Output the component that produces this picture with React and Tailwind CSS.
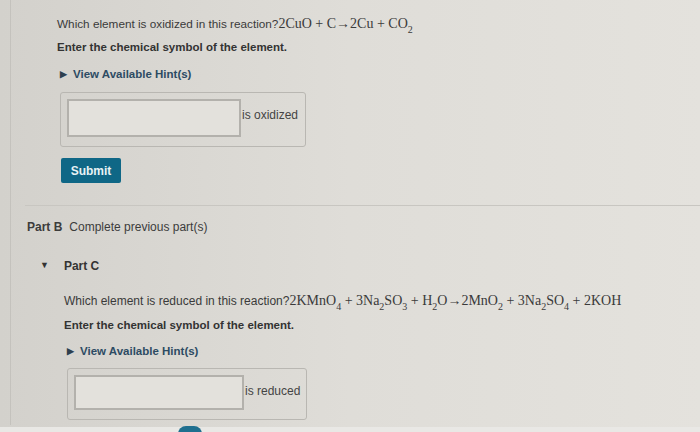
import { Fragment } from "react";

const serif = { fontFamily: '"Liberation Serif", "DejaVu Serif", serif' };

// Chemical formula rendered in serif with subscripts
const Chem = ({ parts }) => (
  <span className="text-[14px] text-[#3a3a3a]" style={serif}>
    {parts.map((p, i) =>
      typeof p === "string" ? (
        <Fragment key={i}>{p}</Fragment>
      ) : (
        <sub key={i} className="text-[10px] align-[-2px]">
          {p.sub}
        </sub>
      )
    )}
  </span>
);

const Hint = () => (
  <div className="flex items-center gap-[6px] text-[11.5px] leading-[14px] font-bold text-[#2d4b63]">
    <span className="text-[9px] text-[#2d3f4f]">▶</span>
    View Available Hint(s)
  </div>
);

const AnswerBox = ({ label, width, inner }) => (
  <div
    className={`flex items-start rounded-[3px] border border-[#b9b7b2] p-[6px] pr-0 ${width}`}
  >
    <div className={`shrink-0 border-2 border-[#b3b1ac] bg-[#e3e1dc] ${inner}`} />
    <span className="ml-[1px] mt-[9px] text-[12px] leading-[14px] text-[#444]">{label}</span>
  </div>
);

export default function App() {
  return (
    <div
      className="relative h-[432px] w-[700px] overflow-hidden bg-linear-to-r from-[#d3d1cc] via-[#dfddd8] to-[#e4e2dd] text-[#333]"
      style={{ fontFamily: '"Liberation Sans", Arial, sans-serif' }}
    >
      <div className="absolute left-[10px] top-0 h-[425px] w-px bg-[#c4c2bd]" />

      <div className="pl-[57px] pt-[15px]">
        <div className="text-[11.75px] leading-[18px] text-[#3a3a3a]">
          Which element is oxidized in this reaction?
          <Chem parts={["2CuO + C→2Cu + CO", { sub: "2" }]} />
        </div>
        <div className="mt-[5px] text-[11.5px] leading-[18px] font-bold text-[#333]">
          Enter the chemical symbol of the element.
        </div>
        <div className="ml-[3px] mt-[11px]">
          <Hint />
        </div>
        <div className="ml-[3px] mt-[11px]">
          <AnswerBox label="is oxidized" width="w-[246px] pb-[9px]" inner="w-[174px] h-[38px]" />
        </div>
        <button className="ml-[4px] mt-[11px] h-[25px] w-[60px] rounded-[2px] bg-[#0f6786] text-[12px] font-bold text-[#e8f2f5]">
          Submit
        </button>
      </div>

      <div className="ml-[25px] mt-[22px] h-px bg-[#c8c6c1]" />

      <div className="pl-[27px] pt-[12px] text-[12px] text-[#3c3c3c]">
        <span className="font-bold">Part B</span>
        <span className="ml-[7px]">Complete previous part(s)</span>
      </div>

      <div className="flex items-center pl-[40px] pt-[21px] text-[12px]">
        <span className="text-[9px] text-[#333]">▼</span>
        <span className="ml-[15px] font-bold text-[#333]">Part C</span>
      </div>

      <div className="pl-[64px] pt-[17px]">
        <div className="text-[12px] leading-[18px] text-[#3a3a3a]">
          Which element is reduced in this reaction?
          <Chem
            parts={[
              "2KMnO",
              { sub: "4" },
              " + 3Na",
              { sub: "2" },
              "SO",
              { sub: "3" },
              " + H",
              { sub: "2" },
              "O→2MnO",
              { sub: "2" },
              " + 3Na",
              { sub: "2" },
              "SO",
              { sub: "4" },
              " + 2KOH",
            ]}
          />
        </div>
        <div className="mt-[6px] text-[11.5px] leading-[18px] font-bold text-[#333]">
          Enter the chemical symbol of the element.
        </div>
        <div className="ml-[3px] mt-[10px]">
          <Hint />
        </div>
        <div className="ml-[3px] mt-[10px]">
          <AnswerBox label="is reduced" width="w-[240px] pb-[9px]" inner="w-[170px] h-[35px]" />
        </div>
      </div>

      <div className="absolute bottom-0 left-0 h-[5px] w-full bg-[#e9e8e5]" />
      <div className="absolute bottom-[-10px] left-[178px] h-[16px] w-[24px] rounded-full bg-[#1f6f8f]" />
    </div>
  );
}
